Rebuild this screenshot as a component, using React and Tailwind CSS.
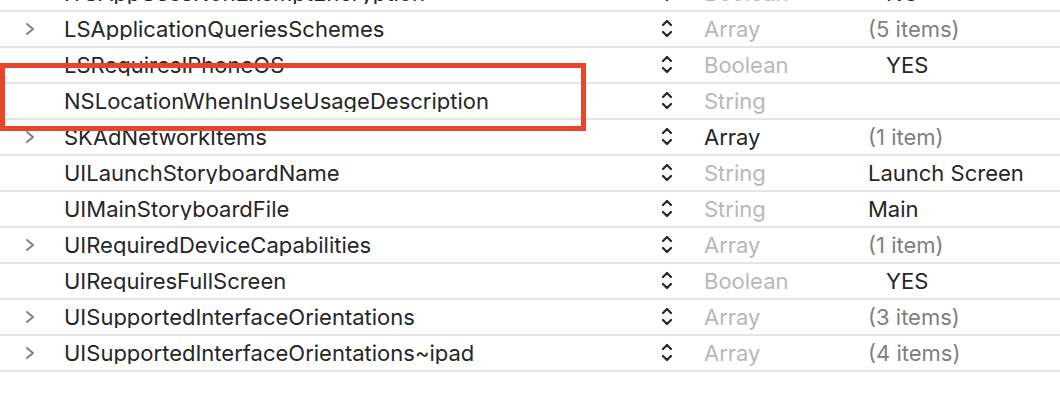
import { useState } from 'react';

const rows = [
  { key: 'ITSAppUsesNonExemptEncryption', type: 'Boolean', value: 'NO', bool: true },
  { key: 'LSApplicationQueriesSchemes', type: 'Array', value: '(5 items)', expand: true },
  { key: 'LSRequiresIPhoneOS', type: 'Boolean', value: 'YES', bool: true },
  { key: 'NSLocationWhenInUseUsageDescription', type: 'String', value: '' },
  { key: 'SKAdNetworkItems', type: 'Array', value: '(1 item)', expand: true, darkType: true },
  { key: 'UILaunchStoryboardName', type: 'String', value: 'Launch Screen' },
  { key: 'UIMainStoryboardFile', type: 'String', value: 'Main' },
  { key: 'UIRequiredDeviceCapabilities', type: 'Array', value: '(1 item)', expand: true },
  { key: 'UIRequiresFullScreen', type: 'Boolean', value: 'YES', bool: true },
  { key: 'UISupportedInterfaceOrientations', type: 'Array', value: '(3 items)', expand: true },
  { key: 'UISupportedInterfaceOrientations~ipad', type: 'Array', value: '(4 items)', expand: true },
];

const Chevron = () => (
  <svg width="12" height="14" viewBox="0 0 12 14" fill="none">
    <path d="M3 2 L9 7 L3 12" stroke="#808080" strokeWidth="2" strokeLinecap="round" strokeLinejoin="round" />
  </svg>
);

const Stepper = () => (
  <svg width="12" height="20" viewBox="0 0 12 20" fill="none">
    <path d="M2 6 L6 2 L10 6" stroke="#262626" strokeWidth="2.2" strokeLinecap="round" strokeLinejoin="round" />
    <path d="M2 13 L6 17 L10 13" stroke="#262626" strokeWidth="2.2" strokeLinecap="round" strokeLinejoin="round" />
  </svg>
);

const Row = ({ row, first }) => {
  const countValue = row.value.startsWith('(');
  return (
    <div
      className={`flex items-center h-[36px] border-b-2 border-[#e5e5e5] ${first ? 'mt-[-24px]' : ''}`}
    >
      <div className="w-[64px] shrink-0 pl-[24px] flex items-center">
        {row.expand && <Chevron />}
      </div>
      <div className="w-[597px] shrink-0 text-[#262626] whitespace-nowrap overflow-hidden">{row.key}</div>
      <div className="w-[43px] shrink-0 flex items-center">
        <Stepper />
      </div>
      <div className={`w-[164px] shrink-0 ${row.darkType ? 'text-[#262626]' : 'text-[#b8b8b8]'}`}>
        {row.type}
      </div>
      <div
        className={`flex-1 whitespace-nowrap ${countValue ? 'text-[#808080]' : 'text-[#262626]'} ${row.bool ? 'pl-[18px]' : ''}`}
      >
        {row.value}
      </div>
    </div>
  );
};

export default function App() {
  const [rowsState] = useState(rows);
  return (
    <div
      className="relative w-[1060px] h-[400px] overflow-hidden bg-white text-[22px] leading-none"
      style={{ fontFamily: 'Inter, "Liberation Sans", sans-serif' }}
    >
      <div className="flex flex-col">
        {rowsState.map((row, i) => (
          <Row key={row.key} row={row} first={i === 0} />
        ))}
      </div>
      <div className="absolute left-0 top-[63px] w-[586px] h-[68px] border-[5px] border-[#e8452c]" />
    </div>
  );
}
